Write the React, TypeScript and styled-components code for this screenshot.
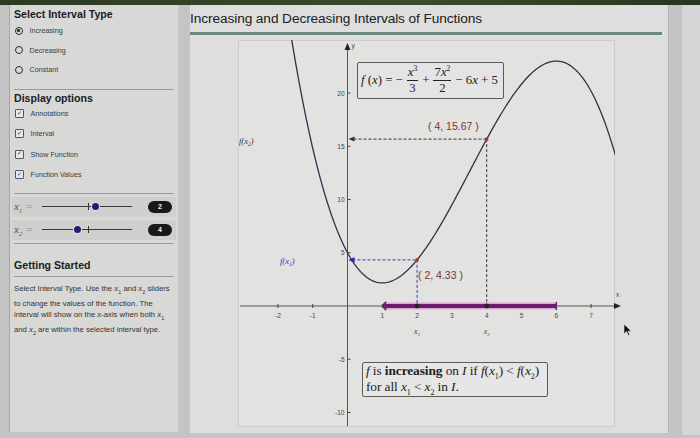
import React from "react";
import styled, { createGlobalStyle } from "styled-components";

const Global = createGlobalStyle`
  html, body { margin: 0; padding: 0; background: #c7c7c7; }
  body { font-family: "Liberation Sans", Arial, sans-serif; }
`;

const Page = styled.div`
  width: 700px;
  height: 438px;
  overflow: hidden;
  display: flex;
  flex-direction: column;
  background: #c4c4c4;
`;

const TopBar = styled.div`
  height: 5px;
  background: linear-gradient(90deg, #2c3a22, #3b4b2c 60%, #2a3520);
  flex: none;
`;

const Body = styled.div`
  display: flex;
  flex: 1;
  padding-left: 9px;
`;

const Sidebar = styled.aside`
  width: 164px;
  height: 425px;
  background: #d8d8d6;
  border-left: 1px solid #a6a6a6;
  padding: 2px 0 0 4px;
  box-sizing: content-box;
  margin-right: 12px;
  display: flex;
  flex-direction: column;
`;

const SectionTitle = styled.div<{ $mt?: number; $h?: number }>`
  font-weight: bold;
  font-size: 10.6px;
  color: #1c1c1c;
  height: ${(p) => p.$h ?? 14}px;
  line-height: ${(p) => p.$h ?? 14}px;
  margin-top: ${(p) => p.$mt ?? 0}px;
`;

const OptionRow = styled.div<{ $h: number }>`
  display: flex;
  align-items: center;
  height: ${(p) => p.$h}px;
  gap: 7px;
  font-size: 7.2px;
  color: #3a3a3a;
  padding-left: 0.5px;
`;

const Radio = styled.span<{ $on?: boolean }>`
  width: 6px;
  height: 6px;
  border-radius: 50%;
  border: 1.7px solid #2a2a2a;
  display: flex;
  align-items: center;
  justify-content: center;
  flex: none;
  &::after {
    content: "";
    width: 2.6px;
    height: 2.6px;
    border-radius: 50%;
    background: ${(p) => (p.$on ? "#2a2a2a" : "transparent")};
  }
`;

const Check = styled.span<{ $blue?: boolean }>`
  width: 7px;
  height: 7px;
  border: 1px solid ${(p) => (p.$blue ? "#3d5a8a" : "#555")};
  border-radius: 1px;
  background: #e8e8e8;
  flex: none;
  display: flex;
  align-items: center;
  justify-content: center;
  font-size: 5.5px;
  line-height: 1;
  color: #333;
`;

const Divider = styled.div<{ $mt: number }>`
  height: 1px;
  background: #9a9a9a;
  margin-top: ${(p) => p.$mt}px;
  margin-right: 4px;
`;

const SliderRow = styled.div<{ $mt: number }>`
  display: flex;
  align-items: center;
  height: 20px;
  margin-top: ${(p) => p.$mt}px;
  margin-left: -2px;
  margin-right: 2px;
  background: #cfcfcd;
  padding-left: 2px;
`;

const SliderLabel = styled.span`
  width: 28px;
  font-family: "Liberation Serif", serif;
  font-style: italic;
  font-size: 11px;
  color: #555;
  display: flex;
  align-items: baseline;
  gap: 4px;
  sub {
    font-size: 6.5px;
  }
  b {
    font-style: normal;
    font-weight: normal;
    color: #888;
  }
`;

const Track = styled.div`
  position: relative;
  width: 90px;
  height: 1.5px;
  background: #3a3a3a;
`;

const TickMark = styled.span<{ $left: number }>`
  position: absolute;
  left: ${(p) => p.$left}px;
  top: -3px;
  width: 1px;
  height: 7px;
  background: #333;
`;

const Thumb = styled.span<{ $left: number }>`
  position: absolute;
  left: ${(p) => p.$left - 3.5}px;
  top: -3px;
  width: 7px;
  height: 7px;
  border-radius: 50%;
  background: #1e1e7a;
  box-shadow: 0 0 0 1px #e0e0e8;
`;

const Badge = styled.span`
  margin-left: 16px;
  width: 24px;
  height: 12px;
  border-radius: 6px;
  background: #181818;
  color: #f4f4f4;
  font-size: 7px;
  font-weight: bold;
  display: flex;
  align-items: center;
  justify-content: center;
`;

const Paragraph = styled.div`
  margin-top: 6px;
  font-size: 7.7px;
  line-height: 11.5px;
  color: #333;
  white-space: nowrap;
  i {
    font-family: "Liberation Serif", serif;
    font-size: 8.8px;
  }
  sub {
    font-size: 5.5px;
  }
`;

const Main = styled.main`
  position: relative;
  width: 478px;
  height: 428px;
  background: #dedede;
  border-right: 1px solid #b5b5b5;
  display: flex;
  flex-direction: column;
`;

const Title = styled.h1`
  margin: 5px 0 0 0;
  font-weight: normal;
  font-size: 13.7px;
  line-height: 17px;
  color: #202020;
  letter-spacing: -0.1px;
`;

const Rule = styled.div`
  height: 3px;
  width: 472px;
  margin-top: 5px;
  background: #6b8a7c;
`;

const GraphWrap = styled.div`
  position: relative;
  width: 385px;
  height: 388px;
  margin: 5px 0 0 48px;
`;

const FormulaBox = styled.div`
  position: absolute;
  left: 119px;
  top: 22px;
  width: 147px;
  height: 37px;
  box-sizing: border-box;
  border: 1.5px solid #5a5a5a;
  border-radius: 2px;
  background: #e4e4e4;
  display: flex;
  align-items: center;
  gap: 4px;
  padding: 0 3px;
  font-family: "Liberation Serif", serif;
  font-size: 12.8px;
  color: #222;
  white-space: nowrap;
  i { font-style: italic; }
`;

const Frac = styled.span`
  display: inline-flex;
  flex-direction: column;
  align-items: center;
  line-height: 15px;
  span:first-child {
    border-bottom: 1px solid #222;
    padding: 0 1px;
  }
  sup {
    font-size: 7.5px;
    vertical-align: 5px;
    line-height: 0;
  }
`;

const NoteBox = styled.div`
  position: absolute;
  left: 124px;
  top: 322px;
  width: 186px;
  height: 35px;
  box-sizing: border-box;
  border: 1.5px solid #5a5a5a;
  border-radius: 2px;
  background: #e6e6e6;
  padding: 0 3px;
  font-family: "Liberation Serif", serif;
  font-size: 13.4px;
  line-height: 16px;
  color: #222;
  white-space: nowrap;
  letter-spacing: -0.1px;
  sub { font-size: 8px; line-height: 0; }
`;

const Cursor = styled.svg`
  position: absolute;
  left: 433px;
  top: 318px;
`;

const RightStrip = styled.div`
  flex: 1;
  height: 430px;
  background: #d6d6d6;
  border-left: 1px solid #c2c2c2;
  margin-left: 12px;
`;

// chart mapping
const X = (x: number) => 109.5 + 34.8 * x;
const Y = (y: number) => 266 - 10.65 * y;
const f = (x: number) => -(x ** 3) / 3 + (7 * x * x) / 2 - 6 * x + 5;

const curvePath = (() => {
  const pts: string[] = [];
  for (let x = -1.9; x <= 8.0001; x += 0.04) {
    pts.push(`${X(x).toFixed(2)},${Y(f(x)).toFixed(2)}`);
  }
  return "M" + pts.join(" L");
})();

const xTicks = [-2, -1, 1, 2, 3, 4, 5, 6, 7];
const yTicks = [20, 15, 10, 5, -5, -10];

function Chart() {
  const x0 = X(0);
  const y0 = Y(0);
  return (
    <svg width={385} height={388} style={{ display: "block" }}>
      <defs>
        <clipPath id="plot">
          <rect x={0} y={0} width={377} height={388} />
        </clipPath>
      </defs>
      <rect x={0.5} y={0.5} width={376} height={386} fill="#e2e2e1" stroke="#cdcdcd" />
      {/* axes */}
      <line x1={2} y1={y0} x2={377} y2={y0} stroke="#555" strokeWidth={1} />
      <polygon points={`${383},${y0} ${376},${y0 - 3} ${376},${y0 + 3}`} fill="#222" />
      <text x={378} y={y0 - 9} fontSize={6.5} fill="#444" fontFamily="Liberation Sans">x</text>
      <line x1={x0} y1={8} x2={x0} y2={386} stroke="#555" strokeWidth={1} />
      <polygon points={`${x0},${3} ${x0 - 3},${10} ${x0 + 3},${10}`} fill="#222" />
      <text x={x0 + 4} y={8} fontSize={6.5} fill="#444" fontFamily="Liberation Sans">y</text>
      {xTicks.map((t) => (
        <g key={t}>
          <line x1={X(t)} y1={y0 - 2} x2={X(t)} y2={y0 + 2} stroke="#444" />
          <text
            x={X(t)}
            y={y0 + 12}
            fontSize={6.5}
            textAnchor="middle"
            fill="#444"
            fontFamily="Liberation Sans"
          >
            {t}
          </text>
        </g>
      ))}
      {yTicks.map((t) => (
        <g key={t}>
          <line x1={x0} y1={Y(t)} x2={x0 + 3} y2={Y(t)} stroke="#444" />
          <text
            x={x0 - 3}
            y={Y(t) + 2.5}
            fontSize={6.5}
            textAnchor="end"
            fill="#444"
            fontFamily="Liberation Sans"
          >
            {t}
          </text>
        </g>
      ))}
      {/* interval */}
      <line x1={X(1) + 2} y1={y0} x2={X(6)} y2={y0} stroke="#dba8d8" strokeWidth={7} />
      <line x1={X(1) + 2} y1={y0} x2={X(6)} y2={y0} stroke="#6c1c6c" strokeWidth={4} />
      <path
        d={`M${X(1) + 4},${y0 - 4} Q${X(1) - 2},${y0} ${X(1) + 4},${y0 + 4}`}
        fill="none"
        stroke="#6c1c6c"
        strokeWidth={2}
      />
      <line x1={X(6)} y1={y0 - 4} x2={X(6)} y2={y0 + 4} stroke="#6c1c6c" strokeWidth={1.5} />
      {/* dashed guides */}
      <line
        x1={x0 + 6}
        y1={Y(15.67)}
        x2={X(4)}
        y2={Y(15.67)}
        stroke="#333"
        strokeDasharray="3 2"
      />
      <polygon
        points={`${x0 + 1},${Y(15.67)} ${x0 + 7},${Y(15.67) - 2.5} ${x0 + 7},${Y(15.67) + 2.5}`}
        fill="#333"
      />
      <line x1={X(4)} y1={Y(15.67)} x2={X(4)} y2={y0} stroke="#333" strokeDasharray="3 2" />
      <line
        x1={x0 + 5}
        y1={Y(4.33)}
        x2={X(2)}
        y2={Y(4.33)}
        stroke="#3a3ac0"
        strokeDasharray="3 2"
      />
      <polygon
        points={`${x0 + 1},${Y(4.33)} ${x0 + 7},${Y(4.33) - 3} ${x0 + 7},${Y(4.33) + 3}`}
        fill="#2a2ad0"
      />
      <line x1={X(2)} y1={Y(4.33)} x2={X(2)} y2={y0} stroke="#3a3ac0" strokeDasharray="3 2" />
      {/* curve */}
      <path d={curvePath} fill="none" stroke="#3b2a4a" strokeWidth={1.3} clipPath="url(#plot)" />
      {/* points */}
      <circle cx={X(2)} cy={Y(4.33)} r={1.8} fill="#b03030" />
      <circle cx={X(4)} cy={Y(15.67)} r={1.8} fill="#b03030" />
      <circle cx={X(2)} cy={y0} r={2.4} fill="#222" />
      <circle cx={X(4)} cy={y0} r={2.4} fill="#222" />
      {/* labels */}
      <text x={190} y={90} fontSize={10.5} fill="#7d3434" fontFamily="Liberation Sans">
        ( 4, 15.67 )
      </text>
      <text x={180} y={239} fontSize={10.5} fill="#7d3434" fontFamily="Liberation Sans">
        ( 2, 4.33 )
      </text>
      <text x={X(2) - 3} y={y0 + 28} fontSize={8} fontStyle="italic" fill="#444" fontFamily="Liberation Serif">
        x<tspan fontSize={5} dy={1.5}>1</tspan>
      </text>
      <text x={X(4) - 3} y={y0 + 28} fontSize={8} fontStyle="italic" fill="#444" fontFamily="Liberation Serif">
        x<tspan fontSize={5} dy={1.5}>2</tspan>
      </text>
      <text x={1} y={104} fontSize={8.5} fontStyle="italic" fill="#333" fontFamily="Liberation Serif">
        f(x<tspan fontSize={5.5} dy={1.5}>2</tspan>
        <tspan dy={-1.5}>)</tspan>
      </text>
      <text x={42} y={224} fontSize={8.5} fontStyle="italic" fill="#3535b0" fontFamily="Liberation Serif">
        f(x<tspan fontSize={5.5} dy={1.5}>1</tspan>
        <tspan dy={-1.5}>)</tspan>
      </text>
    </svg>
  );
}

export default function App() {
  return (
    <Page>
      <Global />
      <TopBar />
      <Body>
        <Sidebar>
          <SectionTitle>Select Interval Type</SectionTitle>
          <OptionRow $h={19.5}>
            <Radio $on />
            Increasing
          </OptionRow>
          <OptionRow $h={19.5}>
            <Radio />
            Decreasing
          </OptionRow>
          <OptionRow $h={19.5}>
            <Radio />
            Constant
          </OptionRow>
          <Divider $mt={9} />
          <SectionTitle $mt={2} $h={12}>
            Display options
          </SectionTitle>
          <OptionRow $h={20.3}>
            <Check>✓</Check>
            Annotations
          </OptionRow>
          <OptionRow $h={20.3}>
            <Check>✓</Check>
            Interval
          </OptionRow>
          <OptionRow $h={20.3}>
            <Check>✓</Check>
            Show Function
          </OptionRow>
          <OptionRow $h={20.3}>
            <Check $blue>✓</Check>
            Function Values
          </OptionRow>
          <Divider $mt={8} />
          <SliderRow $mt={3}>
            <SliderLabel>
              <span>
                x<sub>1</sub>
              </span>
              <b>=</b>
            </SliderLabel>
            <Track>
              <TickMark $left={46} />
              <Thumb $left={53} />
            </Track>
            <Badge>2</Badge>
          </SliderRow>
          <SliderRow $mt={3}>
            <SliderLabel>
              <span>
                x<sub>2</sub>
              </span>
              <b>=</b>
            </SliderLabel>
            <Track>
              <TickMark $left={46} />
              <Thumb $left={35} />
            </Track>
            <Badge>4</Badge>
          </SliderRow>
          <Divider $mt={3} />
          <SectionTitle $mt={14}>Getting Started</SectionTitle>
          <Divider $mt={4} />
          <Paragraph>
            <div>
              Select Interval Type. Use the <i>x</i>
              <sub>1</sub> and <i>x</i>
              <sub>2</sub> sliders
            </div>
            <div>to change the values of the function. The</div>
            <div>
              interval will show on the <i>x</i>-axis when both <i>x</i>
              <sub>1</sub>
            </div>
            <div>
              and <i>x</i>
              <sub>2</sub> are within the selected interval type.
            </div>
          </Paragraph>
        </Sidebar>
        <Main>
          <Title>Increasing and Decreasing Intervals of Functions</Title>
          <Rule />
          <GraphWrap>
            <Chart />
            <FormulaBox>
              <span>
                <i>f</i> (<i>x</i>) = −
              </span>
              <Frac>
                <span>
                  <i>x</i>
                  <sup>3</sup>
                </span>
                <span>3</span>
              </Frac>
              <span>+</span>
              <Frac>
                <span>
                  7<i>x</i>
                  <sup>2</sup>
                </span>
                <span>2</span>
              </Frac>
              <span>
                − 6<i>x</i> + 5
              </span>
            </FormulaBox>
            <NoteBox>
              <div>
                <i>f</i> is <b>increasing</b> on <i>I</i> if <i>f</i>(<i>x</i>
                <sub>1</sub>) &lt; <i>f</i>(<i>x</i>
                <sub>2</sub>)
              </div>
              <div>
                for all <i>x</i>
                <sub>1</sub> &lt; <i>x</i>
                <sub>2</sub> in <i>I</i>.
              </div>
            </NoteBox>
          </GraphWrap>
          <Cursor width={10} height={14} viewBox="0 0 10 14">
            <path d="M1 1 L1 11 L3.5 8.6 L5.4 12.6 L6.8 12 L5 8.2 L8.4 8.2 Z" fill="#111" stroke="#eee" strokeWidth={0.6} />
          </Cursor>
        </Main>
        <RightStrip />
      </Body>
    </Page>
  );
}
